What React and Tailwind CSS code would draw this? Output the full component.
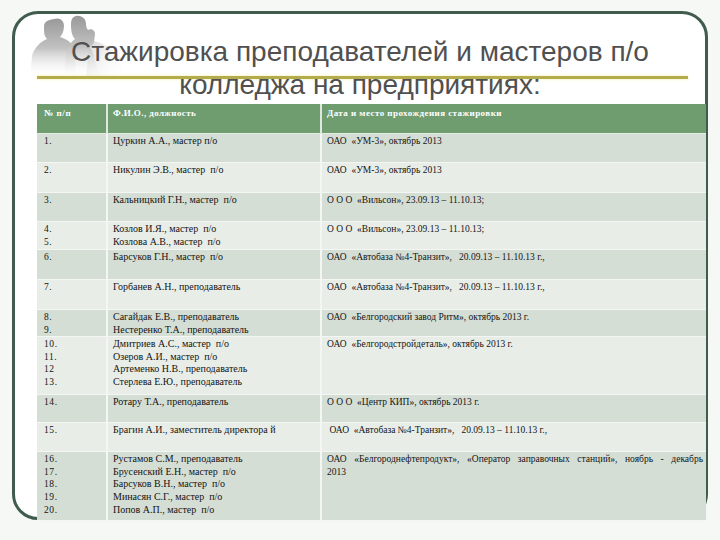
import React from 'react';

const rows = [
  { h: 29, tone: 'dark', nums: ['1.'], names: ['Цуркин А.А., мастер п/о'], place: ['ОАО  «УМ-3», октябрь 2013'] },
  { h: 30, tone: 'light', nums: ['2.'], names: ['Никулин Э.В., мастер  п/о'], place: ['ОАО  «УМ-3», октябрь 2013'] },
  { h: 29, tone: 'dark', nums: ['3.'], names: ['Кальницкий Г.Н., мастер  п/о'], place: ['О О О  «Вильсон», 23.09.13 – 11.10.13;'] },
  { h: 28, tone: 'light', nums: ['4.', '5.'], names: ['Козлов И.Я., мастер  п/о', 'Козлова А.В., мастер  п/о'], place: ['О О О  «Вильсон», 23.09.13 – 11.10.13;'] },
  { h: 30, tone: 'dark', nums: ['6.'], names: ['Барсуков Г.Н., мастер  п/о'], place: ['ОАО  «Автобаза №4-Транзит»,   20.09.13 – 11.10.13 г.,'] },
  { h: 30, tone: 'light', nums: ['7.'], names: ['Горбанев А.Н., преподаватель'], place: ['ОАО  «Автобаза №4-Транзит»,   20.09.13 – 11.10.13 г.,'] },
  { h: 27, tone: 'dark', nums: ['8.', '9.'], names: ['Сагайдак Е.В., преподаватель', 'Нестеренко Т.А., преподаватель'], place: ['ОАО  «Белгородский завод Ритм», октябрь 2013 г.'] },
  {
    h: 58,
    tone: 'light',
    nums: ['10.', '11.', '12', '13.'],
    names: ['Дмитриев А.С., мастер  п/о', 'Озеров А.И., мастер  п/о', 'Артеменко Н.В., преподаватель', 'Стерлева Е.Ю., преподаватель'],
    place: ['ОАО  «Белгородстройдеталь», октябрь 2013 г.'],
  },
  { h: 28, tone: 'dark', nums: ['14.'], names: ['Ротару Т.А., преподаватель'], place: ['О О О  «Центр КИП», октябрь 2013 г.'] },
  { h: 29, tone: 'light', nums: ['15.'], names: ['Брагин А.И., заместитель директора й'], place: [' ОАО  «Автобаза №4-Транзит»,   20.09.13 – 11.10.13 г.,'] },
  {
    h: 69,
    tone: 'dark',
    nums: ['16.', '17.', '18.', '19.', '20.'],
    names: ['Рустамов С.М., преподаватель', 'Брусенский Е.Н., мастер  п/о', 'Барсуков В.Н., мастер  п/о', 'Минасян С.Г., мастер  п/о', 'Попов А.П., мастер  п/о'],
    // first line is justified across the full cell in the slide
    place: ['ОАО «Белгороднефтепродукт», «Оператор заправочных станций», ноябрь - декабрь', '2013'],
    justify: true,
  },
];

// decorative silhouettes in the top-left corner of the slide
const Silhouettes = () => (
  <svg width="92" height="64" viewBox="0 0 92 64" className="absolute left-[15px] top-[0px]">
    <defs>
      <linearGradient id="fade" x1="0" y1="0" x2="0" y2="1">
        <stop offset="0" stopColor="#999999" />
        <stop offset="0.5" stopColor="#c2c2c2" />
        <stop offset="1" stopColor="#ffffff" stopOpacity="0" />
      </linearGradient>
      <linearGradient id="fade2" x1="0" y1="0" x2="1" y2="1">
        <stop offset="0" stopColor="#d2d2d2" />
        <stop offset="1" stopColor="#ffffff" stopOpacity="0" />
      </linearGradient>
    </defs>
    <path d="M60 26 C70 28 84 34 92 44 L92 64 L56 64 Z" fill="url(#fade2)" />
    <path
      d="M24 5 C30 3 34 7 34 12 C34 17 32 21 30 23 C36 25 42 28 44 34 L46 64 L0 64 L2 42 C4 34 10 28 17 25 C14 22 14 18 14 13 C14 8 17 6 24 5 Z"
      fill="url(#fade)"
    />
    <path
      d="M46 2 C52 1 56 5 56 10 C56 13 57 15 58 16 C61 14 65 16 65 20 L64 28 C63 32 60 33 58 30 C62 36 66 44 68 64 L34 64 L36 40 C38 32 42 27 45 25 C42 22 41 17 41 11 C41 6 42 3 46 2 Z"
      fill="url(#fade)"
    />
  </svg>
);

const App = () => {
  return (
    <div className="w-[720px] h-[540px] overflow-hidden bg-[#f6f8f6] pt-[11px] px-[12px]">
      <div className="relative h-[509px] rounded-[26px] border-[3px] border-[#3f5c4f] bg-white">
        <Silhouettes />
        <div className="absolute left-[22px] top-[62px] h-[3px] w-[651px] bg-[#b3ab4c] shadow-[0_0_3px_#f3eea0]"></div>

        <div className="relative pt-[20.8px] text-center font-['Liberation_Sans',Arial,sans-serif] text-[28px] leading-[33px] text-[#505050]">
          <div>Стажировка преподавателей и мастеров п/о</div>
          <div>колледжа на предприятиях:</div>
        </div>

        <div className="relative mt-[3.5px] ml-[22px] mr-[-1px] font-['Liberation_Serif','Times_New_Roman',serif] text-[#141414]">
          <div className="grid h-[30px] grid-cols-[69px_214px_1fr] border-b border-[#e4ebe4] bg-[#6f9d70] text-[9px] font-bold leading-[12px] text-white">
            <div className="px-[7px] pt-[3px] tracking-[0.6px]">№ п/п</div>
            <div className="border-l-2 border-[#dfe8df] px-[5px] pt-[3px] tracking-[0.4px]">Ф.И.О., должность</div>
            <div className="border-l-2 border-[#dfe8df] px-[5px] pt-[3px] tracking-[0.45px]">Дата и место прохождения стажировки</div>
          </div>
          {rows.map((r, i) => (
            <div
              key={i}
              style={{ height: r.h }}
              className={
                'grid grid-cols-[69px_214px_1fr] border-b border-[#f3f6f3] text-[9.5px] leading-[12.6px] ' +
                (r.tone === 'dark' ? 'bg-[#d4ded4]' : 'bg-[#e8ede8]')
              }
            >
              <div className="px-[7px] pt-[1px] tracking-[0.6px]">
                {r.nums.map((n) => (
                  <div key={n}>{n}</div>
                ))}
              </div>
              <div className="border-l-2 border-[#f3f6f3] px-[5px] pt-[1px] text-[10px] whitespace-pre">
                {r.names.map((n) => (
                  <div key={n}>{n}</div>
                ))}
              </div>
              <div className="border-l-2 border-[#f3f6f3] pl-[5px] pr-[3px] pt-[1px]">
                {r.place.map((p, j) => (
                  <div
                    key={j}
                    className={
                      r.justify && j === 0
                        ? 'text-justify [text-align-last:justify]'
                        : 'whitespace-pre'
                    }
                  >
                    {p}
                  </div>
                ))}
              </div>
            </div>
          ))}
        </div>
      </div>
    </div>
  );
};

export default App;
